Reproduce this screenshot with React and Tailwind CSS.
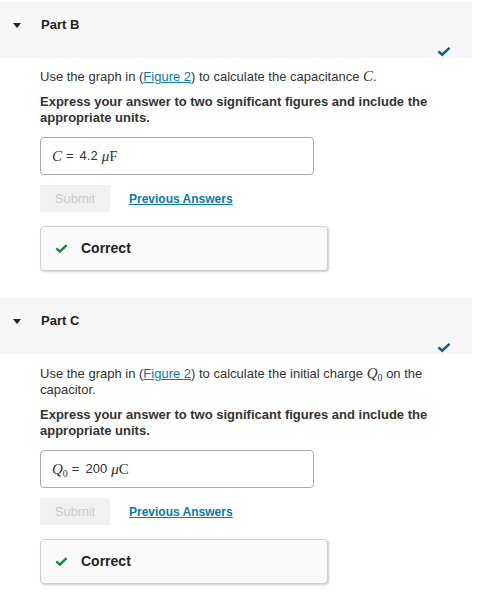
import React from "react";

const sans = { fontFamily: '"Liberation Sans", Arial, sans-serif' };

function HeavyCheck({ className }) {
  return (
    <svg viewBox="0 0 14 10" className={className} fill="currentColor">
      <path d="M0.6 5.2 L2.4 3.4 L5.2 6 L11.6 0 L13.4 1.8 L5.2 9.6 Z" />
    </svg>
  );
}

function PartHeader({ title }) {
  return (
    <div className="w-[472px] h-[56px] bg-[#f7f7f7] flex flex-col">
      <div className="flex items-center h-[22px] mt-[12px]">
        <svg viewBox="0 0 8 5" className="w-[8px] h-[5px] ml-[13px] text-[#222]" fill="currentColor">
          <path d="M0 0 H8 L4 5 Z" />
        </svg>
        <span className="ml-[20px] text-[13px] font-bold text-[#222]">{title}</span>
      </div>
      <HeavyCheck className="w-[14px] h-[10px] text-[#0d5f7c] self-end mr-[21px] mt-[11px]" />
    </div>
  );
}

function Math({ children }) {
  return (
    <span className="italic text-[15px] leading-[16px]" style={{ fontFamily: '"Liberation Serif", "Times New Roman", serif' }}>
      {children}
    </span>
  );
}

function AnswerBox({ lhs, value, unit }) {
  return (
    <div className="w-[274px] h-[38px] border border-[#a9a9a9] rounded-[4px] flex items-center pl-[11px] text-[13px] text-[#333]">
      {lhs}
      <span className="ml-[4px]">=</span>
      <span className="ml-[6px]">{value}</span>
      <span className="ml-[4px] text-[15px]" style={{ fontFamily: '"Liberation Serif", "Times New Roman", serif' }}>
        <span className="italic">μ</span>
        {unit}
      </span>
    </div>
  );
}

function Actions() {
  return (
    <div className="flex items-center mt-[10px]">
      <div className="w-[70px] h-[27px] bg-[#f1f1f1] text-[#cacaca] text-[13px] flex items-center justify-center">
        Submit
      </div>
      <a className="ml-[19px] text-[12px] font-bold text-[#0a7aa6] underline">Previous Answers</a>
    </div>
  );
}

function Correct() {
  return (
    <div className="w-[288px] h-[45px] mt-[14px] border border-[#cfcfcf] rounded-[4px] bg-[#fafafa] shadow-[1px_1px_2px_rgba(0,0,0,0.2)] flex items-center">
      <HeavyCheck className="w-[13px] h-[10px] text-[#12883a] ml-[14px]" />
      <span className="ml-[13px] text-[14px] font-bold text-[#222]">Correct</span>
    </div>
  );
}

function Instruction() {
  return (
    <p className="mt-[9px] text-[13px] leading-[16px] font-bold text-[#333] w-[400px]">
      Express your answer to two significant figures and include the appropriate units.
    </p>
  );
}

function Sub() {
  return <sub className="not-italic text-[10px] leading-none">0</sub>;
}

export default function App() {
  return (
    <div className="w-[489px] h-[605px] bg-white pt-[2px]" style={sans}>
      <PartHeader title="Part B" />
      <div className="pl-[40px] pt-[10px]">
        <p className="text-[13px] leading-[16px] text-[#333]">
          Use the graph in (<a className="text-[#0a7aa6] underline">Figure 2</a>) to calculate the capacitance <Math>C</Math>.
        </p>
        <Instruction />
        <div className="mt-[11px]">
          <AnswerBox lhs={<Math>C</Math>} value="4.2" unit="F" />
        </div>
        <Actions />
        <Correct />
      </div>

      <div className="mt-[27px]">
        <PartHeader title="Part C" />
      </div>
      <div className="pl-[40px] pt-[11px]">
        <p className="text-[13px] leading-[16px] text-[#333] w-[400px]">
          Use the graph in (<a className="text-[#0a7aa6] underline">Figure 2</a>) to calculate the initial charge{" "}
          <Math>
            Q<Sub />
          </Math>{" "}
          on the capacitor.
        </p>
        <Instruction />
        <div className="mt-[11px]">
          <AnswerBox
            lhs={
              <Math>
                Q<Sub />
              </Math>
            }
            value="200"
            unit="C"
          />
        </div>
        <Actions />
        <Correct />
      </div>
    </div>
  );
}
